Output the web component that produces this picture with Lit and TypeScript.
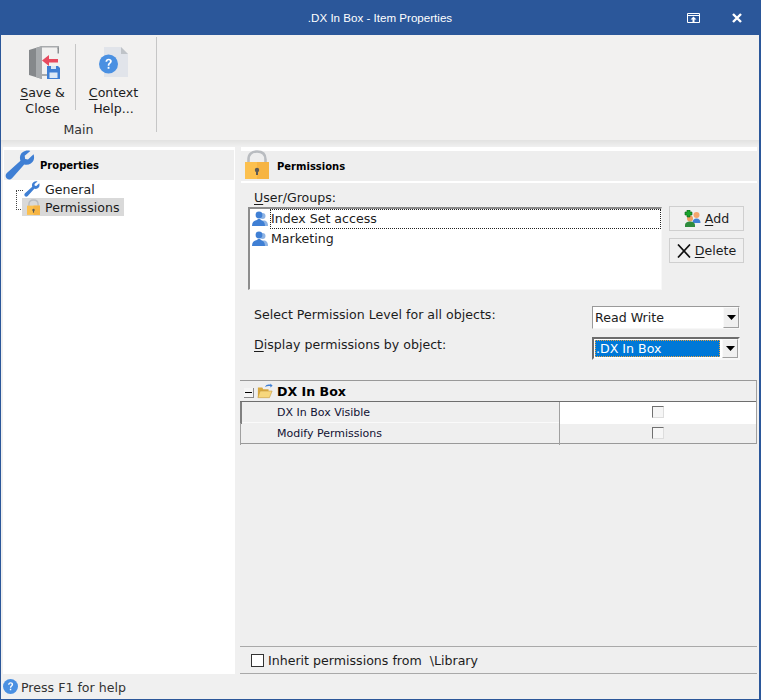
import { LitElement, html, css, svg } from 'lit';
import { customElement } from 'lit/decorators.js';

const wrench = (size: number) => html`<svg width=${size} height=${size} viewBox="0 0 32 32">
  <path d="M30.5 4.5 L24.5 10 L21.5 9.5 L21 6 L27 1 C22.5 -0.5 16.5 2 16 7.5 C15.8 9.5 16.2 10.8 16.5 11.5 L2 24.5 C0 26.5 0.5 29 2 30.5 C3.8 32 6 31.5 7.5 30 L20.5 15.5 C25 16.5 29 14.5 30.5 11 C31.2 9 31.2 6.5 30.5 4.5 Z" fill="#3f7fd4"/>
</svg>`;

const lock = (w: number, h: number) => html`<svg width=${w} height=${h} viewBox="0 0 24 29">
  <path d="M3.5 13 V9.5 C3.5 4 7 1.5 12 1.5 C17 1.5 20.5 4 20.5 9.5 V13" fill="none" stroke="#b9bcc0" stroke-width="2.6"/>
  <rect x="0" y="12" width="24" height="17" fill="#fcc04e"/>
  <rect x="12" y="12" width="12" height="17" fill="#f6b443"/>
  <circle cx="12" cy="20" r="2.2" fill="#5d5a55"/>
  <rect x="11" y="20" width="2" height="5" fill="#5d5a55"/>
</svg>`;

const user = html`<svg width="16" height="16" viewBox="0 0 16 16">
  <circle cx="10.5" cy="5" r="3" fill="#8fb4e4"/>
  <path d="M8 15 C8 11 10 9.5 12 9.5 C14 9.5 16 11 16 15 Z" fill="#8fb4e4"/>
  <circle cx="7" cy="4" r="3.4" fill="#3f7fd4"/>
  <path d="M0 15 C0 11 2 9.5 5 9 L6 8 H8 L9 9 C11.5 9.5 13 11.5 13 15 Z" fill="#3f7fd4"/>
</svg>`;

const qMark = svg`
  <circle cx="10" cy="10" r="10" fill="#4a90e2"/>
  <path d="M6.8 7.6 C6.9 5.6 8.2 4.4 10.2 4.4 C12.2 4.4 13.5 5.6 13.5 7.2 C13.5 9.4 10.9 9.5 10.9 11.8 H9.2 C9.2 8.8 11.5 8.8 11.5 7.3 C11.5 6.6 11 6 10.1 6 C9.2 6 8.7 6.6 8.6 7.6 Z" fill="#fff"/>
  <rect x="9.1" y="13" width="1.9" height="2" fill="#fff"/>`;

const help = (size: number) => html`<svg width=${size} height=${size} viewBox="0 0 20 20">${qMark}</svg>`;

const saveClose = html`<svg width="36" height="36" viewBox="0 0 36 36">
  <path d="M17 1 H34 V4 H32.5 V2.5 H17 Z" fill="#a9abad"/>
  <rect x="32.5" y="2.5" width="1.5" height="6" fill="#8c8f92"/>
  <rect x="17" y="29" width="5" height="2" fill="#a9abad"/>
  <path d="M4 5 L17 1 V34 L4 30 Z" fill="#85888b"/>
  <path d="M17 1 V34 L11 32 V3 Z" fill="#a7aaad"/>
  <path d="M17 15.5 L24 10 V14 H33 V17.5 H24 V21 Z" fill="#e84a5f"/>
  <path d="M22 21 H33 L35 23 V34 H22 Z" fill="#3f7fd4"/>
  <rect x="26" y="21" width="5" height="3" fill="#d8e6f6"/>
  <rect x="24.5" y="27.5" width="8" height="5.5" fill="#dce8f6"/>
</svg>`;

const contextHelp = html`<svg width="36" height="36" viewBox="0 0 36 36">
  <path d="M8 2 H25 L32 9 V32 H8 Z" fill="#e1e4ea"/>
  <path d="M25 2 L32 9 H25 Z" fill="#bfc3c8"/>
  <g transform="translate(3 9.5) scale(.95)">${qMark}</g>
</svg>`;

const addUser = html`<svg width="17" height="17" viewBox="0 0 17 17">
  <circle cx="12.5" cy="5" r="3" fill="#f5a56c"/>
  <path d="M8.5 13 C8.5 10 10 8.5 12.5 8.5 C15 8.5 16.5 10 16.5 13 Z" fill="#3f7fd4"/>
  <circle cx="6" cy="8.5" r="3" fill="#f0a060"/>
  <path d="M1 17 V15 C1 13 3 11.5 6 11.5 C9 11.5 11 13 11 15 V17 Z" fill="#2e8b3d"/>
  <path d="M3 0 H6 V2 H8 V5 H6 V7 H3 V5 H1 V2 H3 Z" fill="#19a52c" stroke="#0b5e18" stroke-width=".6"/>
</svg>`;

const deleteX = html`<svg width="14" height="14" viewBox="0 0 14 14">
  <path d="M1 .5 L13 13.5 M13 .5 L1 13.5" stroke="#111" stroke-width="1.7" fill="none"/>
</svg>`;

const openFolder = html`<svg width="16" height="16" viewBox="0 0 18 18">
  <path d="M1 5 H6 L7 7 H13 V16 H1 Z" fill="#d9a93f"/>
  <path d="M3.5 9 H17 L14 16.5 H1 Z" fill="#f7d77c" stroke="#c2953a" stroke-width=".6"/>
  <path d="M9 4.5 C10 2 12.5 1.2 15 2 L15 0.6 L17.6 3 L15 5 L15 3.5 C13 3 11 3.4 9 4.5 Z" fill="#3f7fd4"/>
</svg>`;

const caret = svg`<path d="M0 0 H9 L4.5 5 Z" fill="#000"/>`;

@customElement('app-root')
export class AppRoot extends LitElement {
  static styles = css`
    :host {
      display: block;
      width: 761px;
      height: 700px;
      font-family: 'DejaVu Sans', Verdana, sans-serif;
      font-size: 12.6px;
      color: #1c1c1c;
    }
    u {
      text-underline-offset: 2px;
    }
    .window {
      box-sizing: border-box;
      width: 761px;
      height: 700px;
      display: flex;
      flex-direction: column;
      border: solid #2b579a;
      border-width: 0 2px 1px 1px;
      background: #f0f0f0;
    }
    .title {
      height: 35px;
      flex: none;
      background: #2b579a;
      color: #fff;
      font-family: 'Liberation Sans', Arial, sans-serif;
      font-size: 11.6px;
      display: flex;
      align-items: center;
      justify-content: center;
      position: relative;
      padding-bottom: 1px;
      box-sizing: border-box;
    }
    .title .controls {
      position: absolute;
      right: 0;
      top: 13px;
      display: flex;
      gap: 32px;
      padding-right: 17px;
    }
    .title svg {
      display: block;
    }
    .ribbon {
      height: 105px;
      flex: none;
      background: #f2f1f0;
      display: flex;
      box-sizing: border-box;
      padding-top: 2px;
    }
    .group {
      width: 155px;
      height: 95px;
      border-right: 1px solid #c6c6c6;
      box-sizing: content-box;
      display: flex;
      flex-direction: column;
    }
    .group .buttons {
      height: 66px;
      flex: none;
      display: flex;
      margin-top: 7px;
    }
    .rbtn {
      box-sizing: border-box;
      width: 75px;
      display: flex;
      flex-direction: column;
      align-items: center;
      line-height: 16px;
      text-align: center;
    }
    .rbtn svg {
      flex: none;
      margin: 1px 0 4px;
      display: block;
    }
    .rbtn span {
      flex: none;
    }
    .rbtn.first {
      border-right: 1px solid #c6c6c6;
      padding-left: 9px;
    }
    .group .label {
      text-align: center;
      line-height: 16px;
      color: #333;
      margin-top: 12px;
    }
    .body {
      flex: 1;
      min-height: 0;
      display: flex;
      padding-left: 2px;
      background: linear-gradient(#e2e2e1, #f0f0f0 7px);
      padding-top: 7px;
      gap: 5px;
    }
    .tree {
      width: 232px;
      flex: none;
      background: #fff;
      box-sizing: border-box;
      padding-top: 3px;
    }
    .tree-head {
      height: 30px;
      background: #efefef;
      display: flex;
      align-items: center;
      gap: 5px;
      font-weight: bold;
      font-size: 10px;
      color: #000;
      padding-left: 1px;
      margin-left: 1px;
      margin-right: 1px;
    }
    .tree-rows {
      padding-left: 19px;
      position: relative;
    }
    .tree-rows .dots {
      position: absolute;
      left: 13px;
      top: 10px;
      width: 6px;
      height: 18px;
      border-left: 1px dotted #444;
      border-top: 1px dotted #444;
      border-bottom: 1px dotted #444;
    }
    .tree-row {
      height: 18px;
      display: inline-flex;
      align-items: center;
      gap: 5px;
      padding-right: 4px;
      white-space: nowrap;
      position: relative;
    }
    .tree-row.sel {
      background: #d9d9d9;
    }
    .tree-row .ic {
      width: 18px;
      display: flex;
      justify-content: flex-end;
    }
    .row-wrap {
      display: block;
      height: 18px;
    }
    .panel {
      flex: 1;
      display: flex;
      flex-direction: column;
      min-width: 0;
      background: #efefef;
      box-sizing: border-box;
      margin-right: 2px;
      position: relative;
    }
    .panel-head {
      height: 36px;
      flex: none;
      background: #eeeeee;
      border-bottom: 2px solid #fff;
      border-top: 4px solid #fff;
      margin-left: 1px;
      box-sizing: border-box;
      display: flex;
      align-items: center;
      gap: 8px;
      padding: 0 0 0 4px;
      font-weight: bold;
      font-size: 10px;
      color: #000;
    }
    .panel-head svg {
      margin-bottom: 3px;
      flex: none;
    }
    .ugroups {
      padding: 7px 13px 0 8px;
      height: 115px;
      box-sizing: border-box;
      flex: none;
    }
    .ugroups .lbl {
      padding-left: 6px;
      line-height: 15px;
      margin-bottom: 2px;
    }
    .ugroups .row {
      display: flex;
      gap: 7px;
    }
    .list {
      width: 414px;
      height: 83px;
      box-sizing: border-box;
      background: #fff;
      border: solid;
      border-color: #8c8c8c #f8f8f8 #f8f8f8 #8c8c8c;
      border-width: 2px 1px 1px 2px;
    }
    .li {
      height: 20px;
      display: flex;
      align-items: center;
      gap: 2px;
      padding-left: 2px;
    }
    .li span {
      flex: 1;
      height: 20px;
      line-height: 19px;
      box-sizing: border-box;
      padding-left: 1px;
    }
    .li.focus span {
      border: 1px dotted #222;
      line-height: 18px;
      padding-left: 0;
    }
    .btns {
      display: flex;
      flex-direction: column;
      gap: 7px;
      margin-top: -1px;
    }
    .btn {
      width: 75px;
      height: 25px;
      box-sizing: border-box;
      background: #f0f0f0;
      border: 1px solid;
      border-color: #fafafa #a6a6a6 #a6a6a6 #fafafa;
      outline: 1px solid #cfcfcf;
      outline-offset: -1px;
      display: flex;
      align-items: center;
      justify-content: center;
      gap: 4px;
    }
    .fields {
      padding: 8px 17px 0 14px;
      flex: none;
      height: 82px;
      box-sizing: border-box;
      display: flex;
      flex-direction: column;
      gap: 8px;
    }
    .field {
      display: flex;
      justify-content: space-between;
      align-items: center;
      height: 23px;
    }
    .field .a {
      padding-bottom: 7px;
    }
    .field .b {
      padding-bottom: 9px;
    }
    .combo {
      width: 148px;
      height: 23px;
      box-sizing: border-box;
      border: 1px solid;
      border-color: #9a9a9a #f7f7f7 #f7f7f7 #9a9a9a;
      background: #fff;
      display: flex;
      padding-left: 2px;
      align-items: stretch;
    }
    .combo .val {
      flex: 1;
      line-height: 21px;
    }
    .combo .drop {
      width: 16px;
      background: #f0f0f0;
      border: 1px solid;
      border-color: #fafafa #a0a0a0 #a0a0a0 #fafafa;
      box-sizing: border-box;
      display: flex;
      align-items: center;
      justify-content: center;
    }
    .combo.active {
      border-width: 2px;
      border-color: #6d6d6d #f7f7f7 #f7f7f7 #6d6d6d;
      padding: 0;
    }
    .combo.active .val {
      background: #0078d7;
      color: #fff;
      outline: 1px dotted #e8a040;
      outline-offset: -1px;
      line-height: 17px;
      padding-left: 1px;
      margin: 1px 2px 1px 1px;
    }
    .grid {
      flex: none;
      border-top: 1px solid #999;
      border-bottom: 1px solid #999;
      border-right: 1px solid #a0a0a0;
    }
    .ghead {
      height: 20px;
      border-bottom: 1px solid #6e6e6e;
      display: flex;
      align-items: center;
      font-weight: bold;
      color: #000;
      padding-left: 4px;
      gap: 3px;
    }
    .minus {
      width: 9px;
      height: 9px;
      margin-top: 3px;
      border-bottom: 1px solid #8a8a8a;
      border-right: 1px solid #8a8a8a;
      display: flex;
      align-items: center;
      justify-content: center;
      background: #f5f5f5;
    }
    .minus i {
      width: 7px;
      height: 1px;
      background: #000;
      display: block;
    }
    .ghead span {
      margin-left: 1px;
    }
    .grow {
      display: grid;
      grid-template-columns: 320px 1fr;
      height: 20px;
      font-size: 11px;
      color: #111133;
    }
    .grow + .grow {
      border-top: 1px solid #fafafa;
    }
    .grow .name {
      box-sizing: border-box;
      padding-left: 36px;
      line-height: 22px;
      border-right: 1px solid #a0a0a0;
      border-left: 1px solid #a0a0a0;
    }
    .grow.sel .name {
      border-left: 2px solid #808080;
      padding-left: 35px;
    }
    .grow .val {
      display: flex;
      align-items: center;
      justify-content: center;
    }
    .grow.sel .val {
      background: #fff;
    }
    .cb {
      width: 12px;
      height: 12px;
      margin-bottom: 2px;
      box-sizing: border-box;
      border: solid;
      border-color: #707070 #ddd #ddd #707070;
      border-width: 1.5px 1px 1px 1.5px;
      background: #f6f6f6;
    }
    .spacer {
      flex: 1;
    }
    .inherit {
      height: 28px;
      flex: none;
      border-top: 1px solid #a9a9a9;
      border-bottom: 1px solid #a9a9a9;
      box-sizing: border-box;
      display: flex;
      align-items: center;
      padding-left: 11px;
      gap: 4px;
    }
    .inherit i {
      width: 13px;
      height: 13px;
      border: 1px solid #333;
      box-sizing: border-box;
      background: #fff;
      display: block;
    }
    .status {
      height: 25px;
      flex: none;
      background: #f0f0f0;
      display: flex;
      align-items: center;
      padding-left: 2px;
      gap: 3px;
      color: #333;
      box-sizing: border-box;
    }
    .status span {
      padding-top: 2px;
    }
  `;

  render() {
    return html`
      <div class="window">
        <div class="title">
          .DX In Box - Item Properties
          <div class="controls">
            <svg width="13" height="10" viewBox="0 0 13 10">
              <path d="M.5 .5 H12.5 V9.5 H.5 Z M.5 2.5 H12.5" fill="none" stroke="#fff"/>
              <path d="M6.5 3.5 L9.5 6.5 H7.5 V9 H5.5 V6.5 H3.5 Z" fill="#fff"/>
            </svg>
            <svg width="10" height="10" viewBox="0 0 10 10">
              <path d="M1 1 L9 9 M9 1 L1 9" stroke="#fff" stroke-width="2.4"/>
            </svg>
          </div>
        </div>
        <div class="ribbon">
          <div class="group">
            <div class="buttons">
              <div class="rbtn first">${saveClose}<span><u>S</u>ave &amp;<br />Close</span></div>
              <div class="rbtn">${contextHelp}<span><u>C</u>ontext<br />Help...</span></div>
            </div>
            <div class="label">Main</div>
          </div>
        </div>
        <div class="body">
          <div class="tree">
            <div class="tree-head">${wrench(30)}Properties</div>
            <div class="tree-rows">
              <div class="dots"></div>
              <div class="row-wrap"><div class="tree-row"><span class="ic">${wrench(16)}</span>General</div></div>
              <div class="row-wrap"><div class="tree-row sel"><span class="ic">${lock(13, 16)}</span>Permissions</div></div>
            </div>
          </div>
          <div class="panel">
            <div class="panel-head">${lock(24, 29)}Permissions</div>
            <div class="ugroups">
              <div class="lbl"><u>U</u>ser/Groups:</div>
              <div class="row">
                <div class="list">
                  <div class="li focus">${user}<span>Index Set access</span></div>
                  <div class="li">${user}<span>Marketing</span></div>
                </div>
                <div class="btns">
                  <div class="btn">${addUser}<span><u>A</u>dd</span></div>
                  <div class="btn">${deleteX}<span><u>D</u>elete</span></div>
                </div>
              </div>
            </div>
            <div class="fields">
              <div class="field">
                <span class="a">Select Permission Level for all objects:</span>
                <div class="combo">
                  <div class="val">Read Write</div>
                  <div class="drop"><svg width="9" height="5" viewBox="0 0 9 5">${caret}</svg></div>
                </div>
              </div>
              <div class="field">
                <span class="b"><u>D</u>isplay permissions by object:</span>
                <div class="combo active">
                  <div class="val">.DX In Box</div>
                  <div class="drop"><svg width="9" height="5" viewBox="0 0 9 5">${caret}</svg></div>
                </div>
              </div>
            </div>
            <div class="grid">
              <div class="ghead"><div class="minus"><i></i></div>${openFolder}<span>DX In Box</span></div>
              <div class="grow sel">
                <div class="name">DX In Box Visible</div>
                <div class="val"><div class="cb"></div></div>
              </div>
              <div class="grow">
                <div class="name">Modify Permissions</div>
                <div class="val"><div class="cb"></div></div>
              </div>
            </div>
            <div class="spacer"></div>
            <div class="inherit"><i></i><span>Inherit permissions from&nbsp; \\Library</span></div>
          </div>
        </div>
        <div class="status">${help(15)}<span>Press F1 for help</span></div>
      </div>
    `;
  }
}
